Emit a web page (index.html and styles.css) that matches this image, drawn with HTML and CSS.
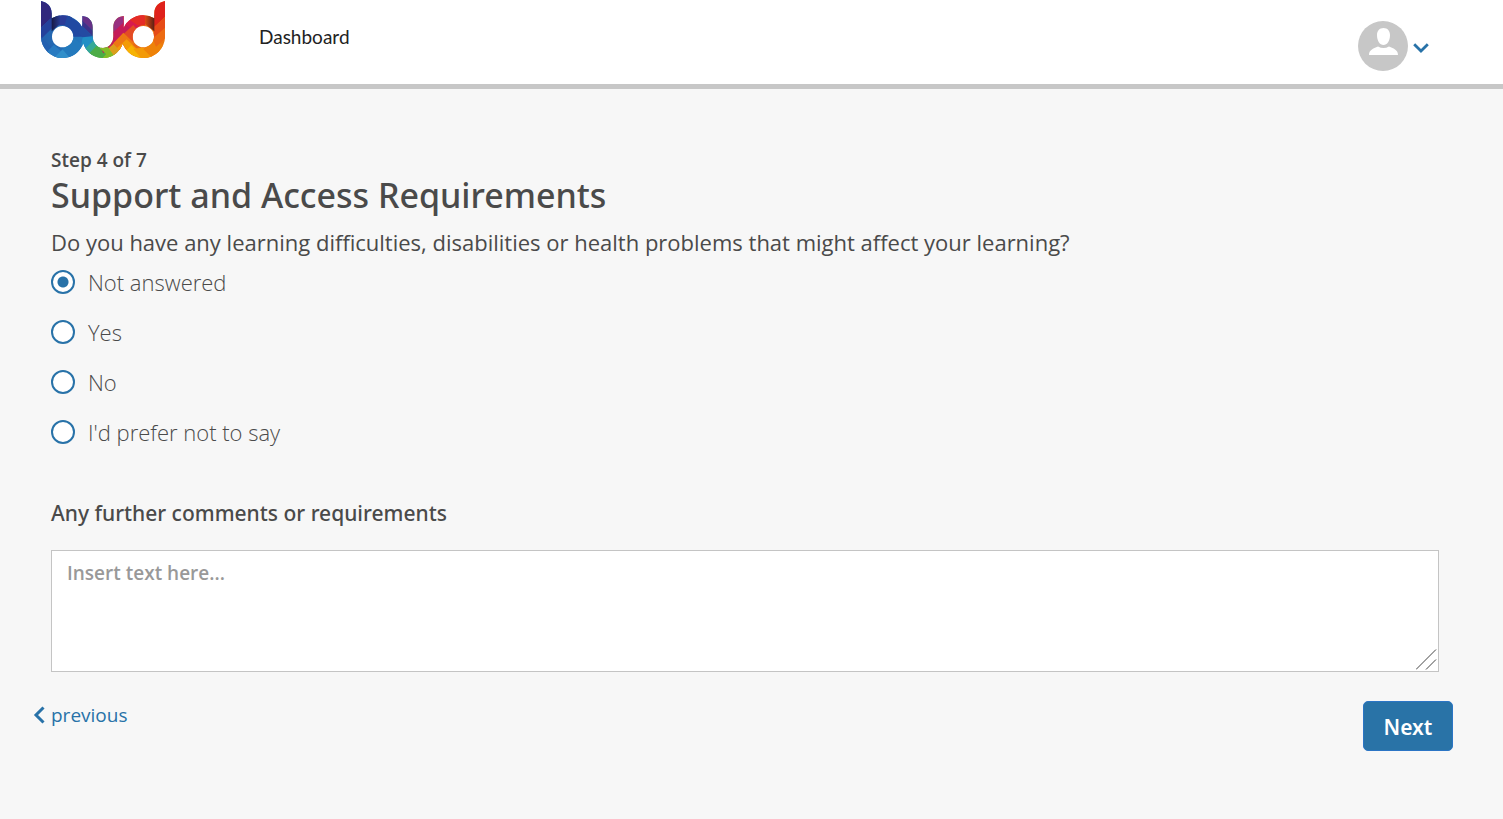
FILE: index.html
```html
<!DOCTYPE html>
<html lang="en">
<head>
<meta charset="utf-8">
<meta name="viewport" content="width=device-width, initial-scale=1">
<title>Support and Access Requirements</title>
<link rel="stylesheet" href="styles.css">
</head>
<body>
<header class="topbar">
  <a class="brand" href="#" aria-label="bud home">
    <svg class="logo" viewBox="33 3 372 171" aria-hidden="true">
      <defs>
        <clipPath id="mark">
          <path d="M33 3C52 7 65 20 65 39V110H33Z"/>
          <path clip-rule="evenodd" d="M33 110A65 64 0 0 1 163 110A65 64 0 0 1 33 110ZM66 110A32 32 0 1 0 130 110A32 32 0 1 0 66 110Z"/>
          <path d="M157 48C176 50 188 62 188 82V111A31 33 0 0 0 250 111V82C250 62 262 50 281 48V112A62 62 0 0 1 157 112Z"/>
          <path clip-rule="evenodd" d="M275 110A65 64 0 0 1 405 110A65 64 0 0 1 275 110ZM308 110A32 32 0 1 0 372 110A32 32 0 1 0 308 110Z"/>
          <path d="M405 3C386 7 373 20 373 39V110H405Z"/>
        </clipPath>
        <linearGradient id="base">
          <stop offset="0" stop-color="#2460ad"/><stop offset=".35" stop-color="#247abd"/>
          <stop offset=".45" stop-color="#4cac47"/><stop offset=".55" stop-color="#83bd28"/>
          <stop offset=".65" stop-color="#e5621c"/><stop offset="1" stop-color="#ec7a10"/>
        </linearGradient>
        <linearGradient id="blue-fold"><stop offset="0" stop-color="#171944"/><stop offset="1" stop-color="#283b91"/></linearGradient>
        <linearGradient id="red-fold"><stop offset="0" stop-color="#df4b12"/><stop offset="1" stop-color="#5b2015"/></linearGradient>
      </defs>
      <g clip-path="url(#mark)">
        <path fill="url(#base)" d="M30 0H408V180H30Z"/>
        <path fill="#30277d" d="M30 0H68V50L30 85Z"/>
        <path fill="#25419b" d="M30 85L66 52V85L30 120Z"/>
        <path fill="#2b3c98" d="M84 45H130L110 76H84Z"/>
        <path fill="url(#blue-fold)" d="M65 40H90V72L65 94Z"/>
        <path fill="#2149a2" d="M112 45L160 75V110H125L104 76Z"/>
        <path fill="#2360b0" d="M33 111L70 148L33 180Z"/>
        <path fill="#297bc1" d="M45 161L72 134L98 158L80 180H45Z"/>
        <path fill="#318fca" d="M72 174L98 148L124 174V180H72Z"/>
        <path fill="#247abd" d="M98 148L132 114L168 144L140 180H124Z"/>
        <path fill="#663087" d="M155 45H190V93L155 62Z"/>
        <path fill="#3d318a" d="M155 60L190 93V110L155 78Z"/>
        <path fill="#244ba2" d="M155 76L190 110L174 128L145 98Z"/>
        <path fill="#218fc5" d="M158 112L192 108L204 136L180 160L154 134Z"/>
        <path fill="#35a996" d="M155 156L190 122L208 144L180 172Z"/>
        <path fill="#4cac47" d="M178 160L202 135L229 162L216 180H178Z"/>
        <path fill="#83bd28" d="M212 145L236 134L264 160L237 180H218L229 162Z"/>
        <path fill="#983080" d="M248 44H284V73L248 100Z"/>
        <path fill="#c51b58" d="M248 98L286 62L308 84L220 160L212 144L248 120Z"/>
        <path fill="#83bd28" d="M208 144L232 140L254 160L237 180H212L229 162Z"/>
        <path fill="#db9e1c" d="M236 145L252 130L272 148L254 170Z"/>
        <path fill="#d81c4d" d="M280 45H340V72L310 90L280 68Z"/>
        <path fill="#e52c26" d="M304 40H345V76H322L300 60Z"/>
        <path fill="#e44b25" d="M250 130L310 75L320 88L308 128L278 156Z"/>
        <path fill="#ed7714" d="M250 130L280 98L313 130L278 164Z"/>
        <path fill="#f39b08" d="M260 145L290 118L330 155L298 180Z"/>
        <path fill="#f6b303" d="M278 163L304 136L340 174V180H278Z"/>
        <path fill="#f39a07" d="M310 147L340 142L368 174V180H338Z"/>
        <path fill="#ee8208" d="M340 148L374 112L406 145L374 180Z"/>
        <path fill="#ec6a12" d="M370 100L406 64V115L378 140L366 112Z"/>
        <path fill="#df211b" d="M370 0H408V48L372 82Z"/>
        <path fill="#e64b17" d="M372 82L406 49V82L372 112Z"/>
        <path fill="url(#red-fold)" d="M345 44H373V94L345 72Z"/>
      </g>
    </svg>
  </a>
  <nav class="nav"><a class="nav-link" href="#">Dashboard</a></nav>
  <button class="account" type="button" aria-label="Account menu">
    <svg class="avatar" viewBox="0 0 50 50" aria-hidden="true">
      <circle cx="25" cy="25" r="25" fill="#c7c7c7"/>
      <path fill="#fff" d="M25.500 7C29.500 7 32 9.800 32 14C32 20 29.200 24 25.500 24S19 20 19 14C19 9.800 21.500 7 25.500 7ZM11 34C11 29 15 27.500 20 25.500Q25.500 28.500 31 25.500C36 27.500 40 29 40 34Z"/>
    </svg>
    <svg class="chevron-down" viewBox="0 0 16 10" aria-hidden="true"><path fill="none" stroke="#2872a8" stroke-width="2.800" d="M1.200 1.200L8 8L14.800 1.200"/></svg>
  </button>
</header>
<main class="page">
  <form class="form">
    <p class="step">Step 4 of 7</p>
    <h1 class="title">Support and Access Requirements</h1>
    <fieldset class="choices">
      <legend class="question">Do you have any learning difficulties, disabilities or health problems that might affect your learning?</legend>
      <label class="choice"><input class="radio" type="radio" name="support" checked>Not answered</label>
      <label class="choice"><input class="radio" type="radio" name="support">Yes</label>
      <label class="choice"><input class="radio" type="radio" name="support">No</label>
      <label class="choice"><input class="radio" type="radio" name="support">I'd prefer not to say</label>
    </fieldset>
    <label class="comments-label" for="comments">Any further comments or requirements</label>
    <div class="comments-box">
      <textarea class="comments" id="comments" placeholder="Insert text here..."></textarea>
      <svg class="grip" viewBox="0 0 21 21" aria-hidden="true"><path stroke="#444" d="M0 20.500L20 .500M10 20.500L20 10.500"/></svg>
    </div>
  </form>
  <div class="actions">
    <a class="previous" href="#"><svg class="chevron-left" viewBox="0 0 12 18" aria-hidden="true"><path fill="none" stroke="#2872a8" stroke-width="3" d="M10.500 1.500L3 9L10.500 16.500"/></svg>previous</a>
    <button class="next" type="button">Next</button>
  </div>
</main>
</body>
</html>
```
FILE: styles.css
```css
* { box-sizing: border-box; }
body {
  margin: 0;
  min-height: 100vh;
  background: #f7f7f7;
  color: #4a4a4a;
  font-family: "Open Sans", "Noto Sans", sans-serif;
}
.topbar {
  display: flex;
  align-items: flex-start;
  height: 89px;
  padding: 0 74px 0 41px;
  background: #fff;
  border-bottom: 5px solid #c7c7c7;
}
.brand { margin-top: 1px; }
.logo { display: block; width: 124px; height: 57px; }
.nav { flex: 1; padding: 24px 0 0 94px; }
.nav-link {
  color: #222;
  font-family: Lato, sans-serif;
  font-size: 19px;
  line-height: 26px;
  text-decoration: none;
}
.account {
  display: flex;
  align-items: center;
  gap: 5px;
  margin-top: 21px;
  padding: 0;
  border: 0;
  background: none;
}
.avatar { width: 50px; height: 50px; }
.chevron-down { width: 16px; height: 10px; margin-top: 4px; }
.page { padding: 59px 50px 68px 33px; }
.form { padding: 0 14px 0 18px; }
.step {
  margin: 0;
  font-size: 19px;
  font-weight: 600;
  line-height: 24px;
}
.title {
  margin: 0;
  font-family: "Noto Sans", sans-serif;
  font-size: 34px;
  font-weight: 500;
  line-height: 46px;
}
.choices {
  display: flex;
  flex-direction: column;
  margin: 0;
  padding: 0;
  border: 0;
  min-width: 0;
}
.question {
  padding: 9px 0 10px;
  font-size: 22px;
  font-weight: 500;
  line-height: 30px;
}
.choice {
  display: flex;
  align-items: center;
  gap: 13px;
  height: 30px;
  margin-bottom: 20px;
  font-size: 22px;
  font-weight: 300;
}
.radio {
  appearance: none;
  width: 24px;
  height: 24px;
  margin: 0;
  border: 2px solid #2872a8;
  border-radius: 50%;
  background: #fff;
}
.radio:checked { background: radial-gradient(circle, #2872a8 5px, #fff 6px); }
.comments-label {
  display: block;
  margin: 31px 0 22px;
  font-family: "Noto Sans", sans-serif;
  font-size: 21px;
  font-weight: 500;
  line-height: 30px;
}
.comments-box { position: relative; }
.comments {
  display: block;
  width: 100%;
  height: 122px;
  padding: 8px 15px;
  border: 1px solid #c4c4c4;
  border-radius: 0;
  background: #fff;
  color: #4a4a4a;
  font-family: "Open Sans", sans-serif;
  font-size: 19px;
  font-weight: 600;
  line-height: 28px;
  resize: none;
}
.comments::placeholder { color: #999; opacity: 1; }
.grip { position: absolute; right: 2px; bottom: 2px; width: 21px; height: 21px; }
.actions {
  display: flex;
  align-items: flex-start;
  justify-content: space-between;
  padding-top: 29px;
}
.previous {
  display: flex;
  align-items: center;
  gap: 6px;
  color: #2872a8;
  font-size: 19px;
  font-weight: 500;
  line-height: 28px;
  text-decoration: none;
}
.chevron-left { width: 12px; height: 18px; }
.next {
  width: 90px;
  height: 50px;
  padding: 2px 0 0;
  border: 1px solid #2b75c5;
  border-radius: 5px;
  background: #2973a7;
  color: #fff;
  font-family: "Noto Sans", sans-serif;
  font-size: 21px;
  font-weight: 600;
}
```
